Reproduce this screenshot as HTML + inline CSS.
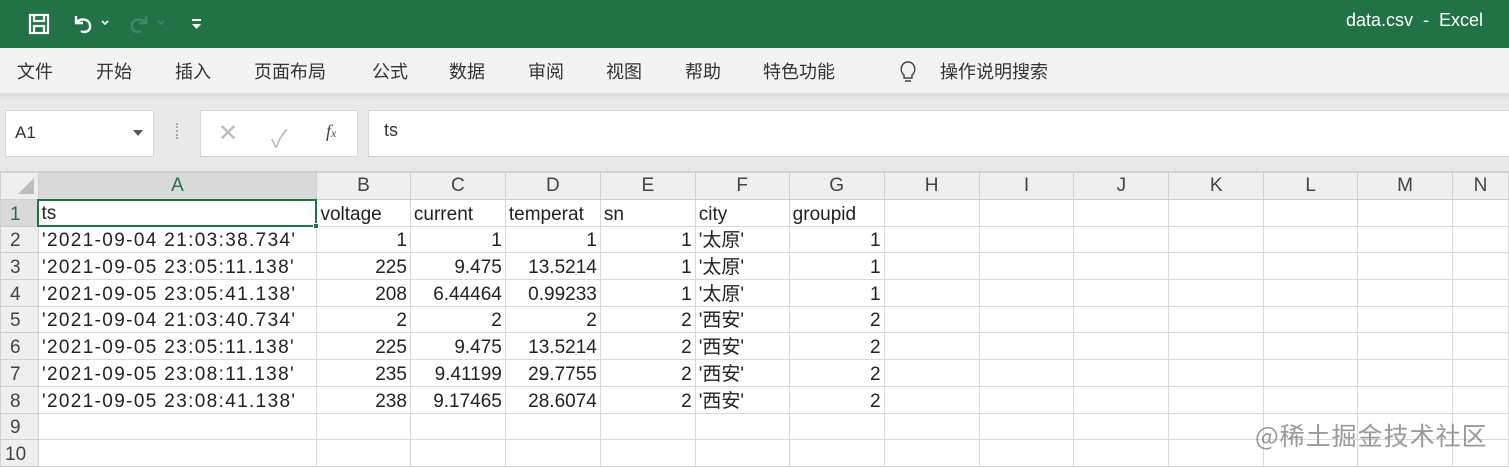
<!DOCTYPE html><html><head><meta charset="utf-8"><style>
*{margin:0;padding:0;box-sizing:border-box}
body{width:1509px;height:468px;overflow:hidden;background:#fff;font-family:"Liberation Sans","Noto Sans CJK SC",sans-serif;position:relative}
.title{position:absolute;left:0;top:0;width:1509px;height:48px;background:#217346}
.menu{position:absolute;left:0;top:48px;width:1509px;height:45px;background:#f3f3f3;font-size:18px;color:#333;font-family:"Noto Sans CJK SC",sans-serif}
.menu span{position:absolute;top:10px}
.fbar{position:absolute;left:0;top:93px;width:1509px;height:79px;background:linear-gradient(#dcdcdc,#e9e9e9 8px);border-bottom:1px solid #d0d0d0}
.box{position:absolute;background:#fff;border:1px solid #d6d6d6}
table{position:absolute;left:0;top:172px;border-collapse:collapse;table-layout:fixed;font-size:19px;color:#222}
td{border:1px solid #d8d8d8;height:26.7px;padding:0 3px;white-space:nowrap;overflow:hidden;line-height:22px;vertical-align:bottom}
tr.h td{background:#efefef;text-align:center;color:#444;height:27px;border-color:#d0d0d0;vertical-align:middle}
td.r{background:#efefef;text-align:left;padding-left:9px;color:#444;border-color:#d0d0d0}
.n{text-align:right}
td.a{letter-spacing:1.35px}
</style></head><body>
<div class="title">
<svg style="position:absolute;left:28px;top:13px" width="22" height="22" viewBox="0 0 22 22" fill="none" stroke="#fff" stroke-width="2.2"><rect x="2" y="2" width="18" height="18"/><path d="M6 2v6h10V2M6 20v-7h10v7"/></svg>
<svg style="position:absolute;left:72px;top:12px" width="42" height="24" viewBox="0 0 42 24" fill="none" stroke="#fff" stroke-width="2.4"><path d="M4 4v7h7M4 11c3-5 13-5 14 2s-6 8-9 6"/><path d="M30 9l3 3 3-3" stroke-width="1.6"/></svg>
<svg style="position:absolute;left:128px;top:12px" width="42" height="24" viewBox="0 0 42 24" fill="none" stroke="#3c8a60" stroke-width="2.4"><path d="M18 4v7h-7M18 11c-3-5-13-5-14 2s6 8 9 6"/><path d="M30 9l3 3 3-3" stroke-width="1.6"/></svg>
<svg style="position:absolute;left:190px;top:17px" width="14" height="14" viewBox="0 0 14 14" fill="#fff"><rect x="2" y="2" width="9" height="2"/><path d="M2 7h9l-4.5 5z"/></svg>
<div style="position:absolute;left:1346px;top:10px;color:#fff;font-size:18px">data.csv&nbsp;&nbsp;-&nbsp;&nbsp;Excel</div>
</div>
<div class="menu">
<span style="left:17px">文件</span><span style="left:96px">开始</span><span style="left:175px">插入</span><span style="left:254px">页面布局</span><span style="left:372px">公式</span><span style="left:449px">数据</span><span style="left:528px">审阅</span><span style="left:606px">视图</span><span style="left:685px">帮助</span><span style="left:763px">特色功能</span>
<svg style="position:absolute;left:899px;top:12px" width="18" height="24" viewBox="0 0 18 24" fill="none" stroke="#444" stroke-width="1.5"><path d="M5 15c-5-4-3-13 4-13s9 9 4 13v3H5z"/><path d="M6 21h6"/></svg>
<span style="left:940px">操作说明搜索</span>
</div>
<div class="fbar">
<div class="box" style="left:5px;top:17px;width:149px;height:47px"><span style="position:absolute;left:9px;top:12px;font-size:17px;color:#333">A1</span><svg style="position:absolute;left:126px;top:18px" width="12" height="8"><path d="M1 1h10L6 7z" fill="#555"/></svg></div>
<div style="position:absolute;left:176px;top:30px;width:2px;height:16px;border-left:2px dotted #aaa"></div>
<div class="box" style="left:200px;top:17px;width:158px;height:47px">
<span style="position:absolute;left:17px;top:8px;font-size:24px;color:#bbb">✕</span>
<span style="position:absolute;left:70px;top:8px;font-size:24px;color:#bbb">✓</span>
<span style="position:absolute;left:125px;top:10px;font-size:18px;color:#444;font-style:italic;font-family:'Liberation Serif',serif">f<small style="font-size:12px">x</small></span></div>
<div class="box" style="left:368px;top:17px;width:1145px;height:47px"><span style="position:absolute;left:15px;top:9px;font-size:18px;color:#333">ts</span></div>
</div>
<table>
<colgroup><col style="width:38px"><col style="width:278px"><col style="width:94px"><col style="width:95px"><col style="width:95px"><col style="width:95px"><col style="width:94px"><col style="width:95px"><col style="width:95px"><col style="width:95px"><col style="width:95px"><col style="width:95px"><col style="width:94px"><col style="width:95px"><col style="width:56px"></colgroup>
<tr class="h"><td></td><td style="background:#d9d9d9;color:#217346;border-bottom:2px solid #217346">A</td><td>B</td><td>C</td><td>D</td><td>E</td><td>F</td><td>G</td><td>H</td><td>I</td><td>J</td><td>K</td><td>L</td><td>M</td><td>N</td></tr>
<tr><td class="r" style="color:#217346;background:#d9d9d9">1</td><td style="border:2px solid #217346;padding-left:2px">ts</td><td>voltage</td><td>current</td><td>temperat</td><td>sn</td><td>city</td><td>groupid</td><td></td><td></td><td></td><td></td><td></td><td></td><td></td></tr>
<tr><td class="r">2</td><td class="a">'2021-09-04 21:03:38.734'</td><td class="n">1</td><td class="n">1</td><td class="n">1</td><td class="n">1</td><td>'太原'</td><td class="n">1</td><td></td><td></td><td></td><td></td><td></td><td></td><td></td></tr>
<tr><td class="r">3</td><td class="a">'2021-09-05 23:05:11.138'</td><td class="n">225</td><td class="n">9.475</td><td class="n">13.5214</td><td class="n">1</td><td>'太原'</td><td class="n">1</td><td></td><td></td><td></td><td></td><td></td><td></td><td></td></tr>
<tr><td class="r">4</td><td class="a">'2021-09-05 23:05:41.138'</td><td class="n">208</td><td class="n">6.44464</td><td class="n">0.99233</td><td class="n">1</td><td>'太原'</td><td class="n">1</td><td></td><td></td><td></td><td></td><td></td><td></td><td></td></tr>
<tr><td class="r">5</td><td class="a">'2021-09-04 21:03:40.734'</td><td class="n">2</td><td class="n">2</td><td class="n">2</td><td class="n">2</td><td>'西安'</td><td class="n">2</td><td></td><td></td><td></td><td></td><td></td><td></td><td></td></tr>
<tr><td class="r">6</td><td class="a">'2021-09-05 23:05:11.138'</td><td class="n">225</td><td class="n">9.475</td><td class="n">13.5214</td><td class="n">2</td><td>'西安'</td><td class="n">2</td><td></td><td></td><td></td><td></td><td></td><td></td><td></td></tr>
<tr><td class="r">7</td><td class="a">'2021-09-05 23:08:11.138'</td><td class="n">235</td><td class="n">9.41199</td><td class="n">29.7755</td><td class="n">2</td><td>'西安'</td><td class="n">2</td><td></td><td></td><td></td><td></td><td></td><td></td><td></td></tr>
<tr><td class="r">8</td><td class="a">'2021-09-05 23:08:41.138'</td><td class="n">238</td><td class="n">9.17465</td><td class="n">28.6074</td><td class="n">2</td><td>'西安'</td><td class="n">2</td><td></td><td></td><td></td><td></td><td></td><td></td><td></td></tr>
<tr><td class="r">9</td><td></td><td></td><td></td><td></td><td></td><td></td><td></td><td></td><td></td><td></td><td></td><td></td><td></td><td></td></tr>
<tr><td class="r" style="padding-left:4px">10</td><td></td><td></td><td></td><td></td><td></td><td></td><td></td><td></td><td></td><td></td><td></td><td></td><td></td><td></td></tr>
</table>
<svg style="position:absolute;left:16px;top:176px" width="20" height="20"><path d="M18 2v16H2z" fill="#bdbdbd"/></svg>
<div style="position:absolute;left:313px;top:223px;width:6px;height:6px;background:#217346;border:1px solid #fff"></div>
<div style="position:absolute;left:1255px;top:417px;font-size:25px;color:rgba(120,120,120,0.75);font-family:'Noto Sans CJK SC',sans-serif;letter-spacing:1px">@稀土掘金技术社区</div>
</body></html>
